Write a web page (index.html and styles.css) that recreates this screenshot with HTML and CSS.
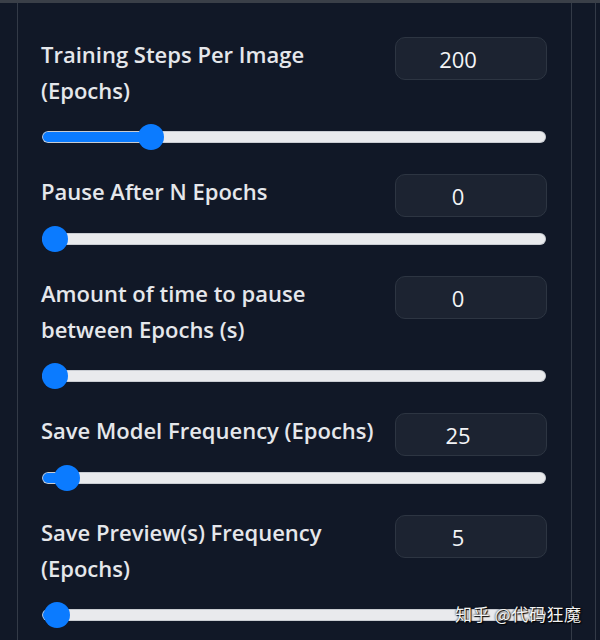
FILE: index.html
```html
<!DOCTYPE html>
<html lang="en">
<head>
	<meta charset="UTF-8">
	<title>Training Settings</title>
	<link rel="stylesheet" href="styles.css">
</head>
<body>

	<div class="topbar"></div>
	<div class="frame">
		<div class="panel">

			<div class="field">
				<div class="head">
					<label class="label">Training Steps Per Image<br>(Epochs)</label>
					<input class="num" type="text" value="200">
				</div>
				<div class="slide"><input type="range" min="0" max="1000" value="200" style="--p: 0.2"></div>
			</div>

			<div class="field">
				<div class="head">
					<label class="label">Pause After N Epochs</label>
					<input class="num" type="text" value="0">
				</div>
				<div class="slide"><input type="range" min="0" max="1000" value="0" style="--p: 0"></div>
			</div>

			<div class="field">
				<div class="head">
					<label class="label">Amount of time to pause<br>between Epochs (s)</label>
					<input class="num" type="text" value="0">
				</div>
				<div class="slide"><input type="range" min="0" max="1000" value="0" style="--p: 0"></div>
			</div>

			<div class="field">
				<div class="head">
					<label class="label">Save Model Frequency (Epochs)</label>
					<input class="num" type="text" value="25">
				</div>
				<div class="slide"><input type="range" min="0" max="1000" value="25" style="--p: 0.025"></div>
			</div>

			<div class="field">
				<div class="head">
					<label class="label">Save Preview(s) Frequency<br>(Epochs)</label>
					<input class="num" type="text" value="5">
				</div>
				<div class="slide"><input type="range" min="0" max="1000" value="5" style="--p: 0.005"></div>
			</div>

		</div>
		<div class="edge"></div>
	</div>

	<div class="mark">知乎 @代码狂魔</div>

</body>
</html>
```

FILE: styles.css
```css
body {
	margin: 0;
	background: #111827;
	font-family: "Open Sans", "Noto Sans", sans-serif;
	height: 640px;
	overflow: hidden;
	position: relative;
}
.topbar {
	height: 3px;
	background: #3a3f48;
}
.frame { display: flex }
.panel {
	width: 555px;
	margin-left: 17px;
	box-sizing: border-box;
	border-left: 1px solid #333a47;
	border-right: 1px solid #333a47;
	padding: 34px 24px 0 23px;
	height: 637px;
}
.edge {
	width: 23px;
	border-right: 1px solid #333a47;
}
.field { margin-bottom: 23px }
.head {
	display: flex;
	justify-content: space-between;
	align-items: flex-start;
}
.label {
	color: #e5e7eb;
	font-size: 22px;
	font-weight: 600;
	line-height: 36px;
	padding: 0 0 7px;
	margin-top: -1px;
	white-space: nowrap;
}
.num {
	width: 152px;
	height: 43px;
	box-sizing: border-box;
	border: 1px solid #2d3542;
	border-radius: 10px;
	background: #1c2331;
	color: #f3f4f6;
	font-family: inherit;
	font-size: 22px;
	font-weight: 500;
	text-align: center;
	padding: 0 26px 0 0;
	outline: none;
}
.slide {
	margin: 8px 1px 0;
	height: 28px;
	display: flex;
	align-items: center;
}
.slide input {
	-webkit-appearance: none;
	appearance: none;
	width: 100%;
	height: 12px;
	margin: 0;
	border-radius: 6px;
	background: linear-gradient(#0b7bff, #0b7bff) 0 0 / calc(13px + var(--p) * (100% - 26px)) 100% no-repeat, #e9eaed;
	box-shadow: inset 0 0 0 1px #c9ccd2;
}
.slide input::-webkit-slider-thumb {
	-webkit-appearance: none;
	width: 26px;
	height: 26px;
	border-radius: 50%;
	background: #0b7bff;
	border: none;
}
.mark {
	position: absolute;
	left: 455px;
	top: 601px;
	color: #f4f4f4;
	font-family: "Noto Sans CJK SC", sans-serif;
	font-size: 17px;
	letter-spacing: 0.6px;
	text-shadow: 0 0 2px #000, 1px 1px 1px #000;
}
```
